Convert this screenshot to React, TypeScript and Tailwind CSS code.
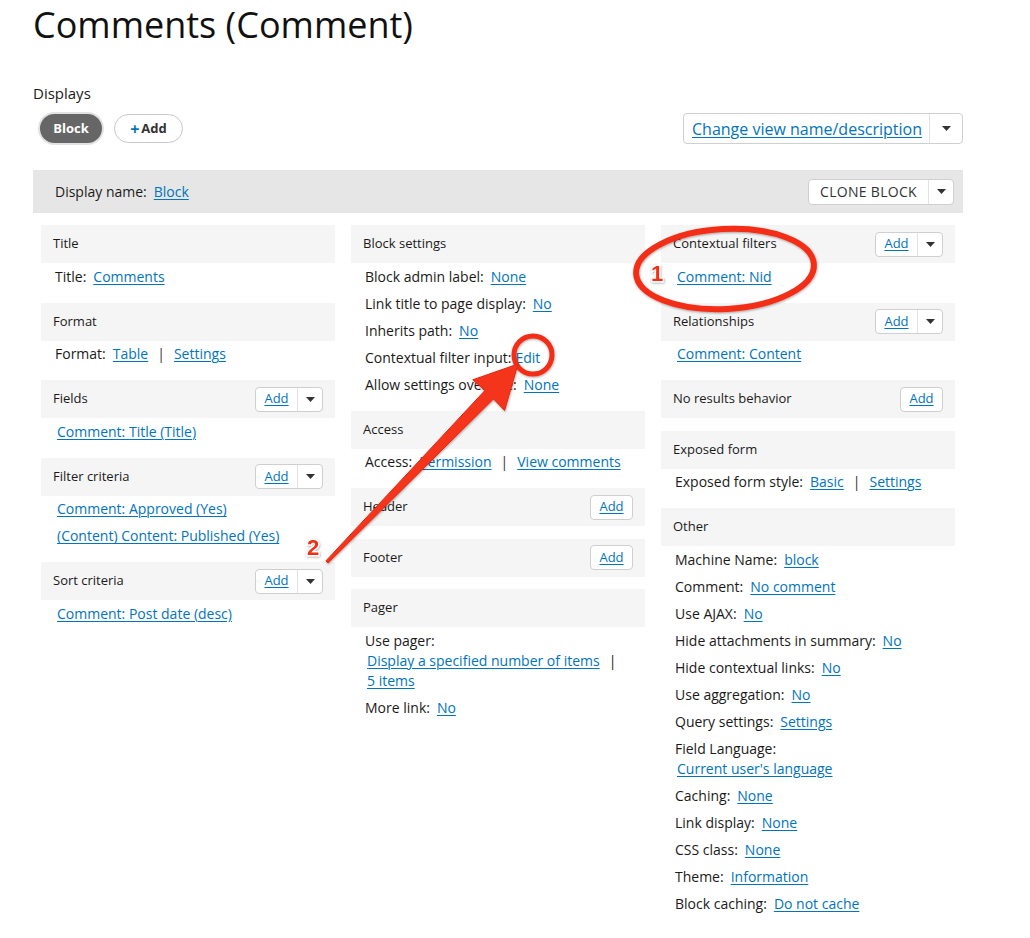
import type { ReactNode } from "react";

const A = ({ children, plain }: { children: ReactNode; plain?: boolean }) => (
  <a
    href="#"
    className={
      plain
        ? "text-[#0074bd] no-underline"
        : "text-[#0074bd] underline underline-offset-[2px] decoration-[1px]"
    }
  >
    {children}
  </a>
);

const Caret = () => (
  <svg width="9" height="5" viewBox="0 0 9 5" className="block">
    <path d="M0 0h9L4.5 5z" fill="#333" />
  </svg>
);

const Pipe = () => <span className="mx-[9px] text-[#333]">|</span>;

function AddButton({ dropdown }: { dropdown?: boolean }) {
  return (
    <div className="flex h-[25px] items-stretch rounded-[4px] border border-[#cfcfcf] bg-white text-[13px]">
      <span className="flex w-[41px] items-center justify-center">
        <A>Add</A>
      </span>
      {dropdown && (
        <span className="flex w-[25px] items-center justify-center border-l border-[#e2e2e2]">
          <Caret />
        </span>
      )}
    </div>
  );
}

function Section({
  title,
  button,
  children,
}: {
  title: string;
  button?: "dropdown" | "single";
  children?: ReactNode;
}) {
  return (
    <div className="mb-[12.5px]">
      <div className="flex h-[38px] items-center justify-between bg-[#f5f5f5] pl-[12px] pr-[12px] text-[13px] text-[#1a1a1a]">
        <span>{title}</span>
        {button && <AddButton dropdown={button === "dropdown"} />}
      </div>
      {children}
    </div>
  );
}

const Row = ({ children }: { children: ReactNode }) => (
  <div className="py-[3.5px] pl-[14px] text-[14px] leading-[20px] text-[#1a1a1a]">{children}</div>
);

const LinkRow = ({ children }: { children: ReactNode }) => (
  <div className="py-[3.5px] pl-[16px] text-[14px] leading-[20px]">
    <A>{children}</A>
  </div>
);

const Pair = ({ label, value, plain }: { label: string; value: string; plain?: boolean }) => (
  <Row>
    {label}:<span className="ml-[7px]" />
    <A plain={plain}>{value}</A>
  </Row>
);

function Annotations() {
  return (
    <svg
      className="pointer-events-none absolute left-0 top-0"
      width="1030"
      height="938"
      viewBox="0 0 1030 938"
    >
      <defs>
        <filter id="sh" x="-20%" y="-20%" width="140%" height="140%">
          <feDropShadow dx="0.5" dy="1" stdDeviation="1" floodColor="#000" floodOpacity="0.35" />
        </filter>
      </defs>
      <g filter="url(#sh)">
        <ellipse
          cx="725"
          cy="269"
          rx="89"
          ry="40"
          transform="rotate(-3 725 269)"
          fill="none"
          stroke="#f42d16"
          strokeWidth="6"
        />
        <circle cx="533" cy="355" r="19" fill="none" stroke="#f42d16" strokeWidth="5" />
        <polygon
          points="325.9,560.9 484.9,390.5 472.8,379.8 518,364 504.6,410.6 493.5,398.9 328.1,563.0"
          fill="#f4341c"
          stroke="#e42812"
          strokeWidth="1"
          strokeLinejoin="round"
        />
      </g>
      <g
        fontFamily="'Liberation Sans', Arial, sans-serif"
        fontWeight="bold"
        fontSize="22"
        fill="#f42d16"
        stroke="#fff"
        strokeWidth="2.5"
        paintOrder="stroke"
        filter="url(#sh)"
      >
        <text x="651" y="281">1</text>
        <text x="307" y="555">2</text>
      </g>
    </svg>
  );
}

export default function App() {
  return (
    <div className="relative min-h-[938px] w-[1030px] bg-white font-['Open_Sans',sans-serif] text-[#1a1a1a]">
      <div className="w-[930px] pl-[33px] box-content">
        <h1 className="pt-[3px] text-[36px] leading-[44px] text-[#111]">Comments (Comment)</h1>

        <div className="mt-[36px] text-[15px] leading-[20px]">Displays</div>

        <div className="mt-[10px] flex items-start justify-between">
          <div className="ml-[7px] mt-[1px] flex items-center gap-[12px]">
            <span className="flex h-[29px] w-[62px] items-center justify-center rounded-full bg-[#666] text-[13px] font-bold text-white shadow-[0_0_0_2px_#e2e2e2]">
              Block
            </span>
            <span className="flex h-[29px] w-[69px] items-center justify-center rounded-full border border-[#c8c8c8] bg-white text-[13px] font-bold text-[#333]">
              <span className="mr-[2px] text-[16px] leading-none text-[#0074bd]">+</span>Add
            </span>
          </div>
          <div className="flex h-[31px] w-[280px] items-stretch rounded-[4px] border border-[#cfcfcf] bg-white">
            <span className="flex flex-1 items-center whitespace-nowrap pl-[8px] text-[16px]">
              <A>Change view name/description</A>
            </span>
            <span className="flex w-[33px] items-center justify-center border-l border-[#e2e2e2]">
              <Caret />
            </span>
          </div>
        </div>

        <div className="mt-[26px] flex h-[43px] items-center justify-between bg-[#e6e6e6] pl-[22px] pr-[9px] text-[14px]">
          <span>
            Display name:<span className="ml-[7px]" />
            <A>Block</A>
          </span>
          <div className="flex h-[26px] w-[146px] items-stretch rounded-[4px] border border-[#d0d0d0] bg-white">
            <span className="flex flex-1 items-center justify-center text-[14px] tracking-[0.3px] text-[#333]">
              CLONE BLOCK
            </span>
            <span className="flex w-[25px] items-center justify-center border-l border-[#e2e2e2]">
              <Caret />
            </span>
          </div>
        </div>

        <div className="mt-[12px] grid grid-cols-3 gap-x-[16px] px-[8px]">
          <div>
            <Section title="Title">
              <Pair label="Title" value="Comments" />
            </Section>
            <Section title="Format">
              <Row>
                Format:<span className="ml-[7px]" />
                <A>Table</A>
                <Pipe />
                <A>Settings</A>
              </Row>
            </Section>
            <Section title="Fields" button="dropdown">
              <LinkRow>Comment: Title (Title)</LinkRow>
            </Section>
            <Section title="Filter criteria" button="dropdown">
              <LinkRow>Comment: Approved (Yes)</LinkRow>
              <LinkRow>(Content) Content: Published (Yes)</LinkRow>
            </Section>
            <Section title="Sort criteria" button="dropdown">
              <LinkRow>Comment: Post date (desc)</LinkRow>
            </Section>
          </div>

          <div>
            <Section title="Block settings">
              <Pair label="Block admin label" value="None" />
              <Pair label="Link title to page display" value="No" />
              <Pair label="Inherits path" value="No" />
              <Row>
                Contextual filter input:<span className="ml-[4px]" />
                <A plain>Edit</A>
              </Row>
              <Pair label="Allow settings override" value="None" />
            </Section>
            <Section title="Access">
              <Row>
                Access:<span className="ml-[7px]" />
                <A>Permission</A>
                <Pipe />
                <A>View comments</A>
              </Row>
            </Section>
            <Section title="Header" button="single" />
            <Section title="Footer" button="single" />
            <Section title="Pager">
              <Row>
                <div>Use pager:</div>
                <div className="ml-[2px]">
                  <A>Display a specified number of items</A>
                  <span className="ml-[9px]">|</span>
                </div>
                <div className="ml-[2px]">
                  <A>5 items</A>
                </div>
              </Row>
              <Pair label="More link" value="No" />
            </Section>
          </div>

          <div>
            <Section title="Contextual filters" button="dropdown">
              <LinkRow>Comment: Nid</LinkRow>
            </Section>
            <Section title="Relationships" button="dropdown">
              <LinkRow>Comment: Content</LinkRow>
            </Section>
            <Section title="No results behavior" button="single" />
            <Section title="Exposed form">
              <Row>
                Exposed form style:<span className="ml-[7px]" />
                <A>Basic</A>
                <Pipe />
                <A>Settings</A>
              </Row>
            </Section>
            <Section title="Other">
              <Pair label="Machine Name" value="block" />
              <Pair label="Comment" value="No comment" />
              <Pair label="Use AJAX" value="No" />
              <Pair label="Hide attachments in summary" value="No" />
              <Pair label="Hide contextual links" value="No" />
              <Pair label="Use aggregation" value="No" />
              <Pair label="Query settings" value="Settings" />
              <Row>
                <div>Field Language:</div>
                <div className="ml-[2px]">
                  <A>Current user's language</A>
                </div>
              </Row>
              <Pair label="Caching" value="None" />
              <Pair label="Link display" value="None" />
              <Pair label="CSS class" value="None" />
              <Pair label="Theme" value="Information" />
              <Pair label="Block caching" value="Do not cache" />
            </Section>
          </div>
        </div>
      </div>
      <Annotations />
    </div>
  );
}
